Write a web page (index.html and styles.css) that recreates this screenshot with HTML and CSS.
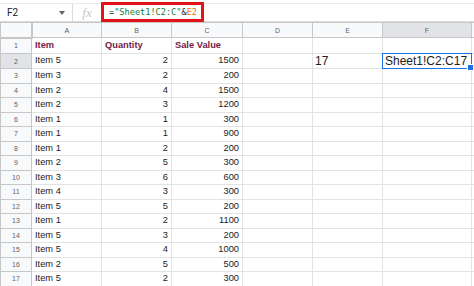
FILE: index.html
```html
<!DOCTYPE html>
<html lang="en">
  <head>
    <meta charset="UTF-8" />
    <title>Sheet</title>
    <link rel="stylesheet" href="styles.css">
  </head>
  <body>
    <div class="formula-bar">
      <div class="name-box">
        <span class="cell-ref">F2</span>
        <svg class="caret" width="6" height="4" viewBox="0 0 6 4"><path d="M0 0h6L3 4z" fill="#5f6368"/></svg>
      </div>
      <div class="fx">fx</div>
      <div class="formula"><span class="op">=</span><span class="str">"Sheet1!C2:C"</span><span class="op">&amp;</span><span class="ref">E2</span></div>
    </div>

    <table class="sheet">
      <colgroup>
        <col class="col-num">
        <col class="col-a">
        <col class="col-b">
        <col class="col-c">
        <col class="col-d">
        <col class="col-e">
        <col class="col-f">
        <col class="col-g">
      </colgroup>
      <tr class="col-head">
        <th class="corner"></th>
        <th>A</th><th>B</th><th>C</th><th>D</th><th>E</th><th class="selected">F</th><th></th>
      </tr>
      <tr class="title-row">
        <th class="row-num">1</th>
        <td class="title">Item</td><td class="title">Quantity</td><td class="title">Sale Value</td>
        <td></td><td></td><td></td><td></td>
      </tr>
      <tr class="row-two">
        <th class="row-num selected">2</th>
        <td>Item 5</td><td class="num">2</td><td class="num">1500</td>
        <td></td><td class="big">17</td><td class="big active">Sheet1!C2:C17</td><td></td>
      </tr>
      <tr><th class="row-num">3</th><td>Item 3</td><td class="num">2</td><td class="num">200</td><td></td><td></td><td></td><td></td></tr>
      <tr><th class="row-num">4</th><td>Item 2</td><td class="num">4</td><td class="num">1500</td><td></td><td></td><td></td><td></td></tr>
      <tr><th class="row-num">5</th><td>Item 2</td><td class="num">3</td><td class="num">1200</td><td></td><td></td><td></td><td></td></tr>
      <tr><th class="row-num">6</th><td>Item 1</td><td class="num">1</td><td class="num">300</td><td></td><td></td><td></td><td></td></tr>
      <tr><th class="row-num">7</th><td>Item 1</td><td class="num">1</td><td class="num">900</td><td></td><td></td><td></td><td></td></tr>
      <tr><th class="row-num">8</th><td>Item 1</td><td class="num">2</td><td class="num">200</td><td></td><td></td><td></td><td></td></tr>
      <tr><th class="row-num">9</th><td>Item 2</td><td class="num">5</td><td class="num">300</td><td></td><td></td><td></td><td></td></tr>
      <tr><th class="row-num">10</th><td>Item 3</td><td class="num">6</td><td class="num">600</td><td></td><td></td><td></td><td></td></tr>
      <tr><th class="row-num">11</th><td>Item 4</td><td class="num">3</td><td class="num">300</td><td></td><td></td><td></td><td></td></tr>
      <tr><th class="row-num">12</th><td>Item 5</td><td class="num">5</td><td class="num">200</td><td></td><td></td><td></td><td></td></tr>
      <tr><th class="row-num">13</th><td>Item 1</td><td class="num">2</td><td class="num">1100</td><td></td><td></td><td></td><td></td></tr>
      <tr><th class="row-num">14</th><td>Item 5</td><td class="num">3</td><td class="num">200</td><td></td><td></td><td></td><td></td></tr>
      <tr><th class="row-num">15</th><td>Item 5</td><td class="num">4</td><td class="num">1000</td><td></td><td></td><td></td><td></td></tr>
      <tr><th class="row-num">16</th><td>Item 2</td><td class="num">5</td><td class="num">500</td><td></td><td></td><td></td><td></td></tr>
      <tr><th class="row-num">17</th><td>Item 5</td><td class="num">2</td><td class="num">300</td><td></td><td></td><td></td><td></td></tr>
    </table>
  </body>
</html>
```

FILE: styles.css
```css
body {
  margin: 0;
  background: #fff;
  font-family: "Liberation Sans", Arial, sans-serif;
  overflow: hidden;
}
.formula-bar {
  display: flex;
  align-items: center;
  height: 19px;
  margin-top: 3px;
  border-top: 1px solid #e8eaed;
  border-bottom: 1px solid #dadce0;
  box-sizing: border-box;
}
.name-box {
  display: flex;
  align-items: center;
  justify-content: space-between;
  width: 73px;
  height: 100%;
  padding: 0 7px 0 7px;
  box-sizing: border-box;
  border-right: 1px solid #dadce0;
}
.cell-ref {
  font-family: Roboto, "Liberation Sans", sans-serif;
  font-size: 10px;
  color: #202124;
}
.fx {
  width: 28px;
  text-align: center;
  font-family: "Liberation Serif", serif;
  font-style: italic;
  font-size: 13px;
  color: #c4c7c5;
}
.formula {
  height: 20px;
  margin-top: -2px;
  width: 103px;
  box-sizing: border-box;
  border: 3px solid #e3131b;
  padding-left: 5px;
  display: flex;
  align-items: center;
  font-family: "DejaVu Sans Mono", monospace;
  font-size: 8.6px;
  white-space: nowrap;
  overflow: hidden;
}
.op {
  color: #202124;
}
.str {
  color: #188038;
}
.ref {
  color: #e8710a;
}
.sheet {
  border-collapse: collapse;
  table-layout: fixed;
  width: 480px;
  font-size: 9.3px;
  color: #222;
}
.col-num { width: 31px; }
.col-a, .col-b, .col-d, .col-e { width: 70px; }
.col-c { width: 71px; }
.col-f { width: 89px; }
.col-g { width: 9px; }
th {
  background: #f8f9fa;
  border: 1px solid #c7c7c7;
  font-weight: normal;
  font-size: 7px;
  color: #5f6368;
  padding: 0;
}
.col-head {
  height: 15px;
}
.corner {
  border-right: 2px solid #c7c7c7;
  border-bottom: 2px solid #c7c7c7;
}
th.selected {
  background: #e1e3e6;
}
td {
  border: 1px solid #e2e3e3;
  padding: 0 3px;
  white-space: nowrap;
  overflow: hidden;
  line-height: 1;
}
tr {
  height: 14.5px;
}
.title-row {
  height: 16px;
}
.row-two {
  height: 15px;
}
.title {
  font-weight: bold;
  color: #741b47;
}
.num {
  text-align: right;
}
.big {
  font-size: 12px;
  padding-left: 2px;
}
.active {
  position: relative;
  overflow: visible;
}
.active::after {
  content: "";
  position: absolute;
  left: -1px;
  top: -1px;
  right: -1px;
  bottom: -1px;
  border: 1.5px solid #1a73e8;
}
.active::before {
  content: "";
  position: absolute;
  right: -3px;
  bottom: -3px;
  width: 5px;
  height: 5px;
  background: #1a73e8;
  border: 1px solid #fff;
  z-index: 1;
}
```
